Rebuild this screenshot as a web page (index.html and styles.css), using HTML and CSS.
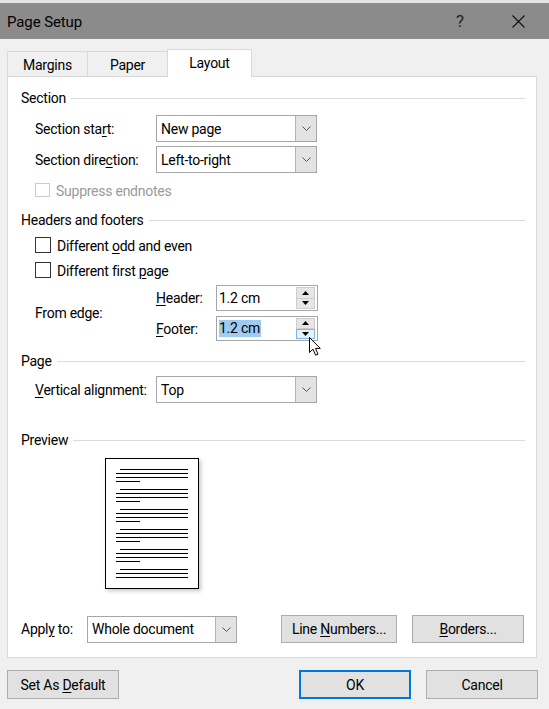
FILE: index.html
```html
<!DOCTYPE html>
<html>
<head>
<meta charset="utf-8">
<link rel="stylesheet" href="styles.css">
</head>
<body>
<div class="topstrip"></div>
<div class="titlebar">
  <div class="title">Page Setup</div>
  <div class="tb-btn">?</div>
  <div class="tb-btn close"><svg width="13" height="13" viewBox="0 0 13 13"><path d="M0.5 0.5 L12.5 12.5 M12.5 0.5 L0.5 12.5" stroke="#111" stroke-width="1.1" fill="none"/></svg></div>
</div>
<div class="tabs">
  <div class="tab t-margins"><span>Margins</span></div>
  <div class="tab t-paper"><span>Paper</span></div>
  <div class="tab t-layout active"><span>Layout</span></div>
</div>
<div class="panel">
  <div class="heading h-section"><span>Section</span></div>
  <div class="row r-start">
    <div class="lbl">Section sta<u>r</u>t:</div>
    <div class="combo"><div class="val">New page</div><div class="dd"><svg width="9" height="5" viewBox="0 0 9 5"><path d="M0.5 0.5 L4.5 4.5 L8.5 0.5" fill="none" stroke="#555"/></svg></div></div>
  </div>
  <div class="row r-dir">
    <div class="lbl">Section dire<u>c</u>tion:</div>
    <div class="combo"><div class="val">Left-to-right</div><div class="dd"><svg width="9" height="5" viewBox="0 0 9 5"><path d="M0.5 0.5 L4.5 4.5 L8.5 0.5" fill="none" stroke="#555"/></svg></div></div>
  </div>
  <div class="check disabled r-supp"><div class="box"></div><span>Suppress endnotes</span></div>

  <div class="heading h-hf"><span>Headers and footers</span></div>
  <div class="check r-odd"><div class="box"></div><span>Different <u>o</u>dd and even</span></div>
  <div class="check r-first"><div class="box"></div><span>Different first <u>p</u>age</span></div>
  <div class="edge">
    <div class="edge-lbl">From edge:</div>
    <div class="sp-lbl"><u>H</u>eader:</div>
    <div class="spin"><div class="sval">1.2 cm</div><div class="sbtns"><div class="sb"><svg width="7" height="4" viewBox="0 0 7 4"><path d="M0 4 L3.5 0 L7 4 Z" fill="#000"/></svg></div><div class="sb"><svg width="7" height="4" viewBox="0 0 7 4"><path d="M0 0 L3.5 4 L7 0 Z" fill="#000"/></svg></div></div></div>
    <div class="sp-lbl"><u>F</u>ooter:</div>
    <div class="spin s2"><div class="sval"><span class="sel">1.2 cm</span></div><div class="sbtns"><div class="sb"><svg width="7" height="4" viewBox="0 0 7 4"><path d="M0 4 L3.5 0 L7 4 Z" fill="#000"/></svg></div><div class="sb hot"><svg width="7" height="4" viewBox="0 0 7 4"><path d="M0 0 L3.5 4 L7 0 Z" fill="#000"/></svg></div></div></div>
  </div>

  <div class="heading h-page"><span>Page</span></div>
  <div class="row r-valign">
    <div class="lbl"><u>V</u>ertical alignment:</div>
    <div class="combo"><div class="val">Top</div><div class="dd"><svg width="9" height="5" viewBox="0 0 9 5"><path d="M0.5 0.5 L4.5 4.5 L8.5 0.5" fill="none" stroke="#555"/></svg></div></div>
  </div>

  <div class="heading h-prev"><span>Preview</span></div>
  <div class="preview">
    <div class="grp"><div class="ln ind"></div><div class="ln"></div><div class="ln"></div><div class="ln short"></div></div>
    <div class="grp"><div class="ln ind"></div><div class="ln"></div><div class="ln"></div><div class="ln short"></div></div>
    <div class="grp"><div class="ln ind"></div><div class="ln"></div><div class="ln"></div><div class="ln short"></div></div>
    <div class="grp"><div class="ln ind"></div><div class="ln"></div><div class="ln"></div><div class="ln short"></div></div>
    <div class="grp"><div class="ln ind"></div><div class="ln"></div><div class="ln"></div><div class="ln short"></div></div>
    <div class="grp"><div class="ln ind"></div><div class="ln"></div><div class="ln"></div></div>
  </div>

  <div class="apply">
    <div class="a-lbl">Appl<u>y</u> to:</div>
    <div class="combo a-combo"><div class="val">Whole document</div><div class="dd"><svg width="9" height="5" viewBox="0 0 9 5"><path d="M0.5 0.5 L4.5 4.5 L8.5 0.5" fill="none" stroke="#555"/></svg></div></div>
    <div class="btn b-line"><span>Line <u>N</u>umbers...</span></div>
    <div class="btn b-borders"><span><u>B</u>orders...</span></div>
  </div>
</div>
<div class="footer">
  <div class="btn f-default"><span>Set As <u>D</u>efault</span></div>
  <div class="btn f-ok"><span>OK</span></div>
  <div class="btn f-cancel"><span>Cancel</span></div>
</div>
<svg class="cursor" width="13" height="20" viewBox="0 0 13 20"><path d="M0.5 0.5 L0.5 15.5 L4 12.2 L6.6 18.2 L9 17.2 L6.5 11.4 L11.3 11.4 Z" fill="#fff" stroke="#000" stroke-width="1" stroke-linejoin="miter"/></svg>
</body>
</html>
```
FILE: styles.css
```css
html, body {
  margin: 0;
  padding: 0;
}
body {
  width: 549px;
  height: 709px;
  overflow: hidden;
  position: relative;
  background: #f0f0f0;
  font-family: "Roboto", "Noto Sans", sans-serif;
  font-size: 14px;
  letter-spacing: -0.25px;
  color: #000;
}
u {
  text-decoration-thickness: 1px;
  text-underline-offset: 2px;
}
.topstrip {
  height: 3px;
  background: #e4e4e4;
}
.titlebar {
  height: 36px;
  background: #8b8b8b;
  display: flex;
  align-items: center;
  padding-left: 7px;
  padding-right: 16px;
}
.title {
  flex: 1;
  font-size: 15px;
  letter-spacing: -0.1px;
  color: #000;
  padding-top: 1px;
}
.tb-btn {
  width: 30px;
  height: 30px;
  display: flex;
  align-items: center;
  justify-content: center;
  font-size: 17px;
  color: #222;
}
.close {
  margin-left: 28px;
}
.tabs {
  margin-top: 10px;
  height: 27px;
  display: flex;
  align-items: flex-end;
  padding-left: 7px;
}
.tab {
  box-sizing: border-box;
  height: 25px;
  border: 1px solid #d9d9d9;
  border-bottom: none;
  background: #f0f0f0;
  display: flex;
  align-items: center;
  justify-content: center;
  padding-top: 1px;
}
.t-margins { width: 81px; }
.t-paper { width: 81px; margin-left: -1px; }
.t-layout {
  width: 85px;
  margin-left: -1px;
  height: 28px;
  margin-bottom: -1px;
  background: #fff;
  position: relative;
  z-index: 1;
  padding-top: 0;
  padding-bottom: 2px;
}
.panel {
  box-sizing: border-box;
  margin-left: 7px;
  width: 530px;
  height: 582px;
  border: 1px solid #d9d9d9;
  background: #fff;
  padding: 0 11px 0 13px;
  display: flex;
  flex-direction: column;
}
.heading {
  box-sizing: border-box;
  height: 16px;
  padding-top: 2px;
  display: flex;
  align-items: center;
  white-space: nowrap;
}
.heading::after {
  content: "";
  flex: 1;
  height: 1px;
  background: #dcdcdc;
  margin-left: 5px;
}
.h-section { margin-top: 12px; }
.h-hf { margin-top: 13px; }
.h-page { margin-top: 11px; }
.h-prev { margin-top: 28px; }
.row {
  display: flex;
  align-items: center;
  height: 27px;
  padding-left: 14px;
}
.r-start { margin-top: 10px; }
.r-dir { margin-top: 4px; }
.r-valign { margin-top: 8px; }
.lbl {
  width: 121px;
  white-space: nowrap;
}
.combo {
  box-sizing: border-box;
  width: 161px;
  height: 27px;
  border: 1px solid #a6a6a6;
  display: flex;
  background: #fff;
}
.val {
  flex: 1;
  display: flex;
  align-items: center;
  padding-left: 4px;
  white-space: nowrap;
}
.dd {
  width: 20px;
  background: #e3e3e3;
  border-left: 1px solid #b4b4b4;
  display: flex;
  align-items: center;
  justify-content: center;
}
.check {
  display: flex;
  align-items: center;
  height: 16px;
  padding-left: 14px;
  white-space: nowrap;
}
.check span {
  padding-top: 1px;
}
.check .box {
  box-sizing: border-box;
  width: 16px;
  height: 16px;
  border: 1px solid #333;
  background: #fff;
  margin-right: 6px;
}
.check.disabled {
  color: #9a9a9a;
}
.check.disabled .box {
  border-color: #cccccc;
  width: 15px;
  height: 14px;
}
.r-supp { margin-top: 9px; }
.r-odd { margin-top: 10px; }
.r-first { margin-top: 9px; }
.edge {
  margin-top: 7px;
  padding-left: 14px;
  display: grid;
  grid-template-columns: 121px 60px 102px;
  grid-template-rows: 26px 25px;
  row-gap: 5px;
  align-items: center;
  white-space: nowrap;
}
.edge-lbl {
  grid-row: 1 / span 2;
  grid-column: 1;
}
.spin {
  box-sizing: border-box;
  height: 100%;
  border: 1px solid #a6a6a6;
  display: flex;
  background: #fff;
}
.sval {
  flex: 1;
  display: flex;
  align-items: center;
  padding-left: 2px;
}
.sel {
  background: #9fcbf0;
  line-height: 17px;
  padding-right: 1px;
}
.sbtns {
  width: 19px;
  margin: 1px 2px 1px 0;
  display: flex;
  flex-direction: column;
}
.sb {
  flex: 1;
  box-sizing: border-box;
  background: #e6e6e6;
  border: 1px solid #cdcdcd;
  display: flex;
  align-items: center;
  justify-content: center;
}
.sb + .sb {
  border-top: none;
}
.sb.hot {
  background: #e5f1fb;
  border: 1px solid #7fb8e6;
}
.preview {
  box-sizing: border-box;
  margin-top: 11px;
  margin-left: 84px;
  width: 94px;
  height: 131px;
  border: 1px solid #000;
  background: #fff;
  box-shadow: 2px 2px 4px rgba(0, 0, 0, 0.22);
  padding: 10px 0 0 10px;
}
.grp {
  margin-bottom: 7px;
}
.ln {
  width: 72px;
  height: 1px;
  background: #000;
  margin-bottom: 3px;
}
.ln.ind {
  width: 68px;
  margin-left: 4px;
}
.ln.short {
  width: 24px;
}
.apply {
  margin-top: 26px;
  height: 28px;
  display: flex;
  align-items: center;
  white-space: nowrap;
}
.a-lbl {
  width: 66px;
}
.a-combo {
  width: 150px;
}
.btn {
  box-sizing: border-box;
  height: 28px;
  background: #e1e1e1;
  border: 1px solid #adadad;
  display: flex;
  align-items: center;
  justify-content: center;
  white-space: nowrap;
}
.b-line { width: 116px; margin-left: 44px; }
.b-borders { width: 112px; margin-left: 15px; }
.footer {
  margin-top: 12px;
  padding-left: 7px;
  display: flex;
}
.footer .btn { height: 29px; width: 112px; }
.f-ok {
  margin-left: 180px;
  border: 2px solid #0078d7 !important;
}
.f-cancel { margin-left: 15px; }
.cursor {
  position: absolute;
  left: 309px;
  top: 337px;
}
```
